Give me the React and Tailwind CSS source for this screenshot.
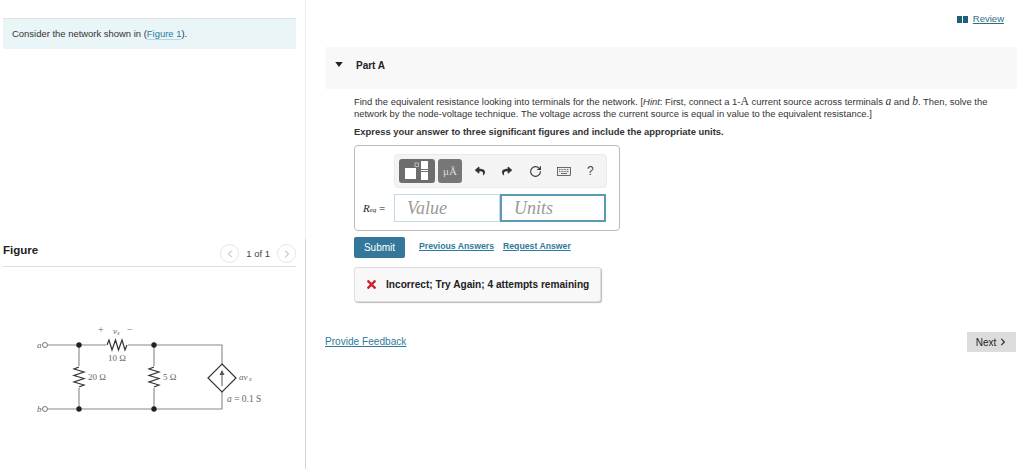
import React from "react";
import { FaReply, FaShare, FaTimes, FaChevronRight } from "react-icons/fa";
import { RotateCw, ChevronLeft, ChevronRight } from "lucide-react";

function Resistor({ x, y, vertical }) {
  const pts = [-10, -8, -5, -1.5, 1.5, 5, 8, 10];
  const off = [0, -5, 5, -5, 5, -5, 5, 0];
  const d = pts
    .map((p, i) => (vertical ? `${x + off[i]},${y + p}` : `${x + p},${y + off[i]}`))
    .join(" ");
  return <polyline points={d} fill="none" stroke="#333" strokeWidth="1.2" />;
}

function Circuit() {
  const serif = { fontFamily: "Liberation Serif, serif", fill: "#666" };
  return (
    <svg width="300" height="110" viewBox="0 320 300 110" className="block">
      <g stroke="#888" strokeWidth="1.1" fill="none">
        <circle cx="45" cy="346" r="2.5" stroke="#555" strokeWidth="0.8" />
        <circle cx="45" cy="410" r="2.5" stroke="#555" strokeWidth="0.8" />
        <path d="M48 346H106M128 346H222V365M222 393V410H48" />
        <path d="M79 346V367M79 389V410M154 346V367M154 389V410" />
        <path d="M222 372V387" stroke="#666" />
      </g>
      <path d="M222 371l-2.5 5h5z" fill="#555" />
      <polygon points="222,365 236,379 222,393 208,379" fill="none" stroke="#333" strokeWidth="1.2" />
      <Resistor x={117} y={346} />
      <Resistor x={79} y={378} vertical />
      <Resistor x={154} y={378} vertical />
      {[[79, 346], [154, 346], [79, 410], [154, 410]].map(([cx, cy]) => (
        <circle key={`${cx}-${cy}`} cx={cx} cy={cy} r="2.7" fill="#222" />
      ))}
      <g fontSize="9" style={serif}>
        <text x="37" y="349" fontStyle="italic">a</text>
        <text x="37" y="413" fontStyle="italic">b</text>
        <text x="98" y="334" fontSize="10">+</text>
        <text x="113" y="335" fontStyle="italic">v</text>
        <text x="117" y="336" fontSize="6" fontStyle="italic">x</text>
        <text x="127" y="334" fontSize="10">−</text>
        <text x="108" y="362">10 Ω</text>
        <text x="88" y="381">20 Ω</text>
        <text x="163" y="381">5 Ω</text>
        <text x="239" y="381" fontStyle="italic">av</text>
        <text x="249" y="382" fontSize="6" fontStyle="italic">x</text>
        <text x="227" y="403" fontSize="9.5"><tspan fontStyle="italic">a</tspan> = 0.1 S</text>
      </g>
    </svg>
  );
}

function TemplateIcon() {
  return (
    <svg width="24" height="20" viewBox="0 0 24 20">
      <rect x="0" y="7" width="11" height="11" fill="#fff" />
      <rect x="9" y="2" width="3.5" height="3.5" fill="none" stroke="#ddd" strokeWidth="0.7" transform="translate(1 0)" />
      <rect x="16" y="0" width="7" height="8" fill="#fff" />
      <rect x="16" y="9" width="7" height="1" fill="#fff" />
      <rect x="16" y="11" width="7" height="8" fill="#fff" />
    </svg>
  );
}

function KeyboardIcon() {
  return (
    <svg width="14" height="9" viewBox="0 0 14 9" fill="none" stroke="#333" strokeWidth="0.7">
      <rect x="0.5" y="0.5" width="13" height="8" fill="#eee" />
      <path d="M2 2.5h10M2 4.5h10" strokeDasharray="1 0.6" />
      <path d="M4 6.5h6" />
    </svg>
  );
}

export default function App() {
  return (
    <div className="flex h-[469px] w-[1024px] overflow-hidden bg-white text-[#333] font-['Liberation_Sans',Arial,sans-serif]">
      <aside className="relative w-[306px] shrink-0 border-r border-[#eeeeee] pt-[18px] pl-[3px]">
        <div className="absolute right-[-1px] top-[239px] bottom-0 w-px bg-[#cfd3dc]"></div>
        <div className="flex h-[31px] w-[293px] items-center border-t border-[#e2e4e4] bg-[#e9f5f7] pl-[9px] text-[9.45px]">
          <span>
            Consider the network shown in (<span className="text-[#2a7ba0] border-b border-[#b8d6e2]">Figure 1</span>).
          </span>
        </div>
        <div className="mt-[190px] flex h-[28px] w-[293px] items-center justify-between border-b border-[#dcdee2] pb-[4px]">
          <span className="text-[11.5px] font-bold text-[#222]">Figure</span>
          <div className="mt-[6px] flex items-center text-[9.5px] text-[#444]">
            <span className="flex h-[19px] w-[19px] items-center justify-center rounded-full border border-[#e6e6e6]">
              <ChevronLeft size={12} color="#aaa" />
            </span>
            <span className="mx-[7px] mt-px">1 of 1</span>
            <span className="flex h-[19px] w-[19px] items-center justify-center rounded-full border border-[#e6e6e6]">
              <ChevronRight size={12} color="#aaa" />
            </span>
          </div>
        </div>
        <div className="-ml-[3px] mt-[52px]">
          <Circuit />
        </div>
      </aside>

      <main className="w-[718px] pl-[19px] pr-[7px]">
        <div className="flex h-[47px] justify-end pr-[13px] pt-[14px]">
          <div className="flex h-[11px] items-center gap-[3px] text-[9.5px] text-[#2f6f86]">
            <span className="flex gap-px">
              <span className="h-[7px] w-[5px] bg-[#1f5f7a]"></span>
              <span className="h-[7px] w-[5px] bg-[#1f5f7a]"></span>
            </span>
            <span className="ml-[2px] underline">Review</span>
          </div>
        </div>

        <div className="flex h-[42px] items-start bg-[#f8f8f8] pt-[11px]">
          <svg width="8" height="5" viewBox="0 0 9 6" className="ml-[10px] mt-[4px]">
            <path d="M0 0h9L4.5 6z" fill="#222" />
          </svg>
          <span className="ml-[13px] text-[10px] font-bold text-[#222]">Part A</span>
        </div>

        <div className="ml-[29px] mt-[7px]">
          <p className="w-[650px] text-[9.43px] leading-[12px]">
            Find the equivalent resistance looking into terminals for the network. [<i>Hint</i>: First, connect a 1-
            <span className="font-['Liberation_Serif',serif] text-[11.5px] leading-[0]">A</span> current source across terminals{" "}
            <i className="font-['Liberation_Serif',serif] text-[11.5px] leading-[0]">a</i> and{" "}
            <i className="font-['Liberation_Serif',serif] text-[11.5px] leading-[0]">b</i>. Then, solve the
            <br />
            network by the node-voltage technique. The voltage across the current source is equal in value to the equivalent resistance.]
          </p>
          <p className="mt-[6px] text-[9.43px] font-bold leading-[12px]">
            Express your answer to three significant figures and include the appropriate units.
          </p>

          <div className="mt-[7px] h-[86px] w-[266px] rounded-[4px] border border-[#bbbbbb] pl-[39px] pt-[8px]">
            <div className="flex h-[34px] w-[213px] items-center rounded-[4px] border border-[#eaeaea] bg-[#f4f4f4] pl-[4px]">
              <span className="flex h-[24px] w-[36px] items-center justify-center rounded-[3px] bg-[#6d6d6d]">
                <TemplateIcon />
              </span>
              <span className="ml-[3px] flex h-[24px] w-[24px] items-center justify-center rounded-[3px] bg-[#777777] font-['Liberation_Serif',serif] text-[11px] text-[#ddd]">
                μÅ
              </span>
              <FaReply size={10} color="#333" className="ml-[13px]" />
              <FaShare size={10} color="#333" className="ml-[17px]" />
              <RotateCw size={13} color="#333" className="ml-[17px]" />
              <span className="ml-[15px]">
                <KeyboardIcon />
              </span>
              <span className="ml-[16px] text-[12px] text-[#444]">?</span>
            </div>
            <div className="relative mt-[6px] flex h-[28px] w-[212px]">
              <span className="absolute left-[-31px] top-[6px] whitespace-nowrap font-['Liberation_Serif',serif] text-[11px] text-[#222]">
                <i>R</i>
                <i className="text-[7px]">eq</i> =
              </span>
              <div className="flex w-[106px] items-center border border-[#c5dbe4] pl-[12px] font-['Liberation_Serif',serif] text-[18px] italic text-[#999]">
                Value
              </div>
              <div className="flex w-[106px] items-center border-2 border-[#5a9ab5] pl-[12px] font-['Liberation_Serif',serif] text-[18px] italic text-[#999]">
                Units
              </div>
            </div>
          </div>

          <div className="mt-[6px] flex h-[21px] items-start">
            <span className="flex h-[21px] w-[51px] items-center justify-center rounded-[2px] bg-[#33789a] text-[10px] text-white">
              Submit
            </span>
            <span className="ml-[14px] mt-[3px] text-[8.7px] font-bold text-[#2f7a9c] underline">Previous Answers</span>
            <span className="ml-[9px] mt-[3px] text-[8.7px] font-bold text-[#2f7a9c] underline">Request Answer</span>
          </div>

          <div className="mt-[9px] flex h-[35px] w-[247px] items-center rounded-[3px] border border-[#dddddd] bg-[#f8f8f8] pl-[10px] shadow-[1px_1px_1px_#bbb]">
            <FaTimes size={13} color="#c8252c" />
            <span className="ml-[8px] text-[10.15px] font-bold text-[#222]">Incorrect; Try Again; 4 attempts remaining</span>
          </div>
        </div>

        <div className="mt-[30px] flex items-center justify-between pr-px">
          <span className="text-[10.1px] text-[#2f7a9c] underline">Provide Feedback</span>
          <span className="flex h-[20px] w-[49px] items-center justify-center gap-[3px] bg-[#dcdcdc] text-[10px] text-[#222]">
            Next <FaChevronRight size={8} color="#333" />
          </span>
        </div>
      </main>
    </div>
  );
}
